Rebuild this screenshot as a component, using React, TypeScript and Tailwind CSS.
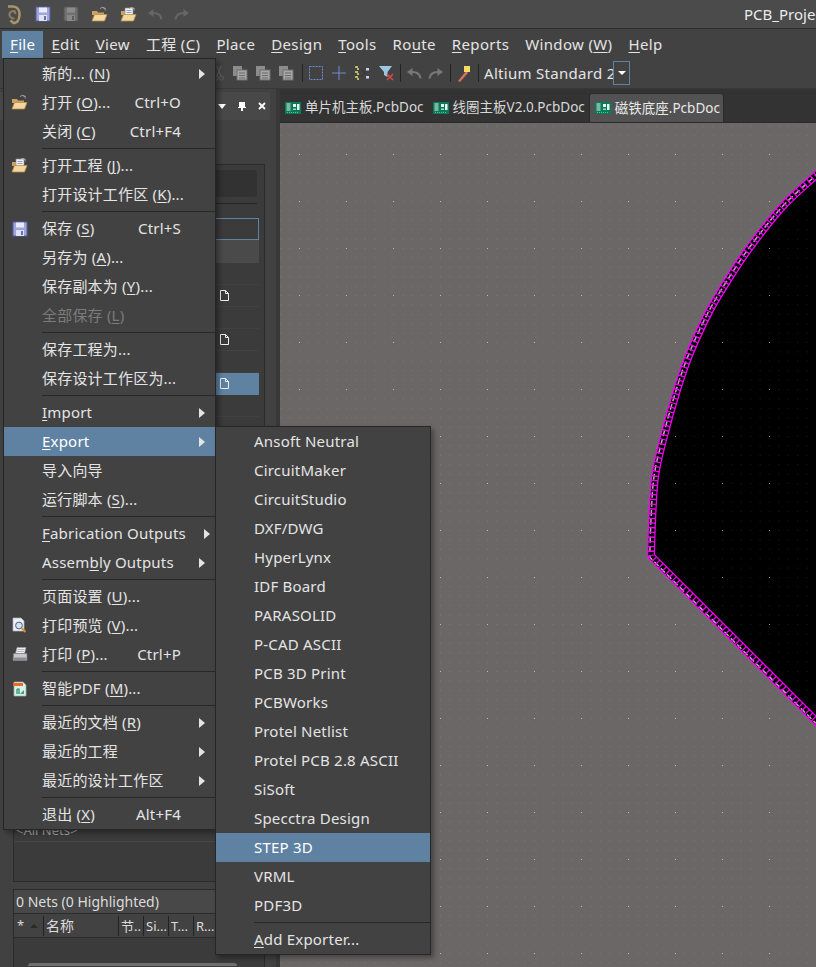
import React from "react";

const FONT = "font-['Noto_Sans','Noto_Sans_CJK_SC',sans-serif]";

type MenuEntry =
  | { sep: true }
  | { label: string; key?: string; arrow?: boolean; icon?: React.ReactNode; disabled?: boolean; active?: boolean; sep?: false };

// "&" marks the mnemonic letter, same as a Windows menu resource
function Label({ text }: { text: string }) {
  const i = text.indexOf("&");
  if (i < 0) return <>{text}</>;
  return (
    <>
      {text.slice(0, i)}
      <u className="underline-offset-2">{text[i + 1]}</u>
      {text.slice(i + 2)}
    </>
  );
}

function SaveIcon({ dim }: { dim?: boolean }) {
  return (
    <svg width="16" height="16" viewBox="0 0 16 16" className={dim ? "opacity-40 grayscale" : ""}>
      <rect x="1" y="1" width="14" height="14" fill="#9ea4dc" stroke="#565c98" />
      <rect x="4" y="1.5" width="8" height="5" fill="#e9ebfa" />
      <rect x="4" y="9" width="8" height="6" fill="#dfe2f6" />
      <rect x="9" y="10" width="2" height="4" fill="#6a70aa" />
    </svg>
  );
}

function FolderIcon({ doc }: { doc?: boolean }) {
  return (
    <svg width="17" height="17" viewBox="0 0 17 17">
      <path d="M1 5h5l1 1.5h6V9H1z" fill="#c9a263" />
      {doc && <rect x="5" y="2" width="8" height="8" fill="#f2f2f2" stroke="#8a8a8a" strokeWidth="0.6" />}
      {doc && <path d="M6.5 4.5h5M6.5 6.5h5" stroke="#7684b8" strokeWidth="0.8" />}
      <path d="M1 15 L3.5 8.5 H16 L13.5 15z" fill="#f3d79f" stroke="#b68c4c" strokeWidth="0.8" />
      <path d="M9 2.5c2-1.5 4-1.5 5 .5" fill="none" stroke="#a9a9a9" strokeWidth="0.9" />
      <path d="M14.2 4.5v-2.4h-2" fill="none" stroke="#a9a9a9" strokeWidth="0.8" />
    </svg>
  );
}

function PreviewIcon() {
  return (
    <svg width="16" height="17" viewBox="0 0 16 17">
      <path d="M1 1h8l3 3v10H1z" fill="#eef0f6" stroke="#aeb2c0" strokeWidth="0.7" />
      <circle cx="7" cy="8.5" r="3.4" fill="#cfe2f3" stroke="#50607a" strokeWidth="1" />
      <path d="M9.5 11l4 4" stroke="#d6913a" strokeWidth="1.8" />
    </svg>
  );
}

function PrintIcon() {
  return (
    <svg width="16" height="15" viewBox="0 0 16 15">
      <path d="M5 0.500h9l-1.500 6h-9z" fill="#f0f0f0" stroke="#9b9b9b" strokeWidth="0.6" />
      <path d="M5.500 2.500h7M5 4.500h7" stroke="#8e8e8e" strokeWidth="0.6" />
      <path d="M1.500 6.500h13.500v7H1z" fill="#c8c8cc" stroke="#77777d" strokeWidth="0.7" />
      <rect x="1.500" y="10.500" width="13" height="3" fill="#8c8c92" />
    </svg>
  );
}

function PdfIcon() {
  return (
    <svg width="16" height="16" viewBox="0 0 16 16">
      <path d="M2 1h9l3 3v11H2z" fill="#dceee6" stroke="#8eb6a6" strokeWidth="0.7" />
      <rect x="1" y="2" width="10" height="3" fill="#ee6a24" />
      <path d="M5 8v5M5 8h2v5" fill="none" stroke="#1d8a68" strokeWidth="1.2" />
      <path d="M8 13l4-4v4z" fill="#35a47f" />
    </svg>
  );
}

function PcbIcon() {
  return (
    <svg width="16" height="12" viewBox="0 0 16 12" className="shrink-0">
      <rect width="16" height="12" fill="#0b7a58" />
      <path d="M1.5 2h4M1.5 4h4M1.5 6h4M1.5 8h4" stroke="#e6f5ee" strokeWidth="1" />
      <rect x="8" y="2" width="3" height="3" fill="#e6f5ee" />
      <rect x="12" y="2" width="2.5" height="6" fill="#e6f5ee" />
      <rect x="8" y="6.5" width="3" height="1.5" fill="#9fd8c0" />
      <path d="M2 10.5h12" stroke="#5fbb98" strokeWidth="1" strokeDasharray="1 1" />
    </svg>
  );
}

function DocIcon() {
  return (
    <svg width="9" height="11" viewBox="0 0 9 11">
      <path d="M.5.5h5l3 3v7H.5z" fill="none" stroke="#eeeeee" />
      <path d="M5.5.5v3h3" fill="none" stroke="#eeeeee" />
    </svg>
  );
}

function Arrow() {
  return (
    <svg width="6" height="10" viewBox="0 0 6 10">
      <path d="M0 0l6 5-6 5z" fill="#e4e4e4" />
    </svg>
  );
}

function UndoIcon({ flip, color }: { flip?: boolean; color: string }) {
  return (
    <svg width="16" height="12" viewBox="0 0 16 12" className={flip ? "-scale-x-100" : ""}>
      <path d="M14.500 11.500C14 7 11 5 6 5" fill="none" stroke={color} strokeWidth="2.200" />
      <path d="M6.500 1L1 5l5.500 4z" fill={color} />
    </svg>
  );
}

const fileMenu: MenuEntry[] = [
  { label: "新的... (&N)", arrow: true },
  { label: "打开 (&O)...", key: "Ctrl+O", icon: <FolderIcon /> },
  { label: "关闭 (&C)", key: "Ctrl+F4" },
  { sep: true },
  { label: "打开工程 (&J)...", icon: <FolderIcon doc /> },
  { label: "打开设计工作区 (&K)..." },
  { sep: true },
  { label: "保存 (&S)", key: "Ctrl+S", icon: <SaveIcon /> },
  { label: "另存为 (&A)..." },
  { label: "保存副本为 (&Y)..." },
  { label: "全部保存 (&L)", disabled: true },
  { sep: true },
  { label: "保存工程为..." },
  { label: "保存设计工作区为..." },
  { sep: true },
  { label: "&Import", arrow: true },
  { label: "&Export", arrow: true, active: true },
  { label: "导入向导" },
  { label: "运行脚本 (&S)..." },
  { sep: true },
  { label: "&Fabrication Outputs", arrow: true },
  { label: "Assem&bly Outputs", arrow: true },
  { sep: true },
  { label: "页面设置 (&U)..." },
  { label: "打印预览 (&V)...", icon: <PreviewIcon /> },
  { label: "打印 (&P)...", key: "Ctrl+P", icon: <PrintIcon /> },
  { sep: true },
  { label: "智能PDF (&M)...", icon: <PdfIcon /> },
  { sep: true },
  { label: "最近的文档 (&R)", arrow: true },
  { label: "最近的工程", arrow: true },
  { label: "最近的设计工作区", arrow: true },
  { sep: true },
  { label: "退出 (&X)", key: "Alt+F4" },
];

const exportMenu: MenuEntry[] = [
  { label: "Ansoft Neutral" },
  { label: "CircuitMaker" },
  { label: "CircuitStudio" },
  { label: "DXF/DWG" },
  { label: "HyperLynx" },
  { label: "IDF Board" },
  { label: "PARASOLID" },
  { label: "P-CAD ASCII" },
  { label: "PCB 3D Print" },
  { label: "PCBWorks" },
  { label: "Protel Netlist" },
  { label: "Protel PCB 2.8 ASCII" },
  { label: "SiSoft" },
  { label: "Specctra Design" },
  { label: "STEP 3D", active: true },
  { label: "VRML" },
  { label: "PDF3D" },
  { sep: true },
  { label: "&Add Exporter..." },
];

function Menu({ items, className }: { items: MenuEntry[]; className: string }) {
  return (
    <div className={`absolute z-10 border border-[#262626] bg-[#424242] shadow-[3px_3px_5px_rgba(0,0,0,0.35)] ${className}`}>
      {items.map((it, i) =>
        it.sep ? (
          <div key={i} className="ml-[38px] flex h-[5px] items-center">
            <div className="h-px w-full bg-[#282828]" />
          </div>
        ) : (
          <div
            key={i}
            className={`flex h-[29px] items-center whitespace-nowrap text-[15px] tracking-[0.2px] ${it.active ? "bg-[#5f82a3] text-white" : ""} ${
              it.disabled ? "text-[#7b7b7b]" : "text-[#e4e4e4]"
            }`}
          >
            <div className="flex w-[38px] shrink-0 justify-center pr-[7px]">{it.icon}</div>
            <span className="flex-1">
              <Label text={it.label} />
            </span>
            {it.key && <span>{it.key}</span>}
            {it.key || it.arrow ? (
              <div className="flex w-[34px] shrink-0 justify-end pr-[10px]">{it.arrow && <Arrow />}</div>
            ) : null}
          </div>
        ),
      )}
    </div>
  );
}

const menuBar = ["&File", "&Edit", "&View", "工程 (&C)", "&Place", "&Design", "&Tools", "Ro&ute", "&Reports", "Window (&W)", "&Help"];

function TitleBar() {
  return (
    <div className="flex h-[29px] shrink-0 items-center overflow-hidden border-b border-[#2c2c2c] bg-[#4b4b4b]">
      <svg width="14" height="21" viewBox="0 0 14 21" className="ml-[7px]">
        <path d="M1 2.500H6C10.500 2.500 12.500 6 12.500 10.500C12.500 15 10.500 19 6.500 19L3.500 16.500" fill="none" stroke="#a8946a" strokeWidth="2.600" />
        <path d="M7.500 14.500C4.500 14.500 2.500 12.500 2.500 10.500C2.500 8 4.500 7 7.500 7L8.500 10" fill="none" stroke="#8d7d5a" strokeWidth="2.200" />
      </svg>
      <div className="ml-[14px] flex items-center gap-[12px]">
        <SaveIcon />
        <SaveIcon dim />
        <FolderIcon />
        <FolderIcon doc />
        <div className="-ml-[2px]">
          <UndoIcon color="#666666" />
        </div>
        <div className="-ml-[1px]">
          <UndoIcon flip color="#666666" />
        </div>
      </div>
      <span className="ml-auto w-[72px] shrink-0 overflow-hidden whitespace-nowrap text-[15px] text-[#ececec]">PCB_Project</span>
    </div>
  );
}

function MenuBar() {
  return (
    <div className="flex h-[29px] shrink-0 items-end bg-[#424242] pl-[2px] text-[15px] tracking-[0.35px] text-[#e4e4e4]">
      {menuBar.map((m, i) => (
        <div
          key={m}
          className={`flex h-[27px] items-center whitespace-nowrap px-[8px] ${i === 0 ? "bg-[#5f82a3] text-white" : ""}`}
        >
          <span>
            <Label text={m} />
          </span>
        </div>
      ))}
    </div>
  );
}

function ToolSep() {
  return <div className="h-[18px] w-px bg-[#232323]" />;
}

function Toolbar() {
  return (
    <div className="flex h-[31px] shrink-0 items-center border-b border-[#383838] bg-[#424242] pl-[214px]">
      <svg width="10" height="16" viewBox="0 0 10 16" className="opacity-50">
        <path d="M7 1L3 11M3 1l4 10" stroke="#777" strokeWidth="1.2" />
        <circle cx="2.500" cy="13" r="2" fill="none" stroke="#777" />
        <circle cx="7.500" cy="13" r="2" fill="none" stroke="#777" />
      </svg>
      <div className="ml-[8px] flex items-center gap-[7px]">
        {[0, 1, 2].map((i) => (
          <svg key={i} width="16" height="16" viewBox="0 0 16 16">
            <rect x="1" y="1" width="9" height="10" fill="#8c8c8c" />
            <rect x="5" y="5" width="10" height="10" fill="#a6a6a6" stroke="#6f6f6f" />
            <path d="M7 8h6M7 10.500h6M7 13h6" stroke="#6b6b6b" />
          </svg>
        ))}
      </div>
      <div className="ml-[8px]">
        <ToolSep />
      </div>
      <svg width="15" height="15" viewBox="0 0 15 15" className="ml-[6px]">
        <rect x=".5" y=".5" width="13" height="13" fill="none" stroke="#7288d4" strokeDasharray="2 1" />
      </svg>
      <svg width="14" height="14" viewBox="0 0 14 14" className="ml-[8px]">
        <path d="M7 0v14M0 7h14" stroke="#7288d4" />
      </svg>
      <svg width="16" height="14" viewBox="0 0 16 14" className="ml-[8px]">
        <path d="M1 1h3M3 3h2M1 6h3M3 8h2M1 11h3M3 13h2" stroke="#e4e070" strokeWidth="1.4" />
        <path d="M7 3l4 4-4 4" fill="none" stroke="#333" />
        <rect x="12" y="2" width="3" height="2.500" fill="#ccd2ee" />
        <rect x="12" y="10" width="3" height="2.500" fill="#ccd2ee" />
      </svg>
      <svg width="17" height="16" viewBox="0 0 17 16" className="ml-[8px]">
        <path d="M1 1h13L9.500 7v5L6 10V7z" fill="#9cc6e4" />
        <path d="M9 9l6 6M15 9l-6 6" stroke="#d24a4a" strokeWidth="1.6" />
      </svg>
      <div className="ml-[5px]">
        <ToolSep />
      </div>
      <div className="ml-[5px]">
        <UndoIcon color="#787878" />
      </div>
      <div className="ml-[6px]">
        <UndoIcon flip color="#787878" />
      </div>
      <div className="ml-[6px]">
        <ToolSep />
      </div>
      <svg width="14" height="17" viewBox="0 0 14 17" className="ml-[6px]">
        <path d="M1 16l8-10 2 2-8 9z" fill="#d9705a" />
        <rect x="7" y="1" width="6" height="6" fill="#f3dc66" />
      </svg>
      <div className="ml-[7px]">
        <ToolSep />
      </div>
      <span className="ml-[5px] w-[129px] shrink-0 overflow-hidden whitespace-nowrap text-[15px] tracking-[0.3px] text-[#e4e4e4]">Altium Standard 2D</span>
      <div className="flex h-[24px] w-[17px] shrink-0 items-center justify-center border border-[#5f82a3]">
        <div className="h-0 w-0 border-x-[4px] border-t-[4px] border-x-transparent border-t-white" />
      </div>
    </div>
  );
}

function PanelHeader() {
  return (
    <div className="mt-[3px] mr-[6px] flex h-[28px] items-center justify-end bg-[#484848] pr-[4px]">
      <div className="mr-[12px] h-0 w-0 border-x-[4px] border-t-[5px] border-x-transparent border-t-white" />
      <svg width="8" height="9" viewBox="0 0 8 9" className="mr-[12px]">
        <path d="M1 0h6v5h1v1H5v3H3V6H0V5h1z" fill="#fff" />
      </svg>
      <svg width="8" height="8" viewBox="0 0 8 8">
        <path d="M1 1l6 6M7 1L1 7" stroke="#fff" strokeWidth="1.8" />
      </svg>
    </div>
  );
}

function ListRow({ doc, active }: { doc?: boolean; active?: boolean }) {
  return (
    <div className={`flex h-[22px] items-center justify-end border-b pr-[30px] ${active ? "border-transparent bg-[#5f82a3]" : "border-[#424242]"}`}>
      {doc && <DocIcon />}
    </div>
  );
}

function NetsPanel() {
  const cols = [
    { t: "名称", w: "w-[75px]" },
    { t: "节..", w: "w-[25px]" },
    { t: "Si...", w: "w-[25px]" },
    { t: "T...", w: "w-[25px]" },
    { t: "R...", w: "w-[25px]" },
  ];
  return (
    <div className="mt-[7px] ml-[13px] flex w-[252px] flex-1 flex-col border border-b-0 border-[#2b2b2b] bg-[#3b3b3b]">
      <div className="flex h-[24px] shrink-0 items-center border-b border-[#2b2b2b] bg-[#484848] pl-[2px] text-[14px] text-[#dcdcdc]">
        0 Nets (0 Highlighted)
      </div>
      <div className="flex h-[24px] shrink-0 items-center border-b border-[#2b2b2b] bg-[#424242] text-[13px] text-[#dcdcdc]">
        <div className="flex w-[29px] shrink-0 items-center gap-[6px] pl-[3px]">
          <span>*</span>
          <div className="h-0 w-0 border-x-[4px] border-b-[4px] border-x-transparent border-b-[#2a2a2a]" />
        </div>
        {cols.map((c) => (
          <div key={c.t} className={`h-[20px] shrink-0 overflow-hidden whitespace-nowrap border-l border-[#222] pl-[2px] leading-[20px] ${c.w} ${c.t === "名称" ? "text-[14px]" : ""}`}>
            {c.t}
          </div>
        ))}
      </div>
      <div className="flex flex-1 items-end pb-[1px] pl-[14px]">
        <div className="h-[3px] w-[209px] rounded-t-[3px] bg-[#6e6e6e]" />
      </div>
    </div>
  );
}

function LeftPanel() {
  return (
    <div className="flex w-[280px] shrink-0 flex-col border-r-4 border-[#383838] bg-[#414141]">
      <PanelHeader />
      <div className="mt-[44px] ml-[13px] flex h-[718px] w-[252px] shrink-0 flex-col border border-[#2b2b2b] bg-[#3b3b3b]">
        <div className="mt-[5px] ml-[6px] h-[27px] w-[237px] shrink-0 rounded-[3px] bg-[#323232]" />
        <div className="mt-[6px] ml-[6px] h-px w-[237px] shrink-0 bg-[#262626]" />
        <div className="mt-[14px] ml-[6px] flex w-[239px] flex-col">
          <div className="h-[22px] border border-[#5f82a3]" />
          <div className="h-[23px] bg-[#4a4a4a]" />
          <ListRow />
          <ListRow doc />
          <ListRow />
          <ListRow doc />
          <ListRow />
          <ListRow doc active />
          <ListRow />
        </div>
        <div className="flex-1" />
        <div className="flex h-[22px] shrink-0 items-center border-b border-[#464646] pl-[2px] text-[13px] text-[#a0a0a0]">&lt;All Nets&gt;</div>
        <div className="h-[39px] shrink-0" />
      </div>
      <NetsPanel />
    </div>
  );
}

function Tab({ name, active }: { name: string; active?: boolean }) {
  return (
    <div
      className={`flex h-[29px] items-center gap-[4px] whitespace-nowrap rounded-t-[3px] pl-[5px] pr-[3px] text-[13.5px] ${
        active ? "border-x border-t border-[#2b2b2b] bg-[#525252] text-[#e8e8e8]" : "text-[#d8d8d8]"
      }`}
    >
      <PcbIcon />
      {name}
    </div>
  );
}

// board outline points read off the screenshot, smoothed with catmull-rom
const arc: [number, number][] = [
  [840, 152], [816, 175], [783, 206], [753, 243], [733, 272], [710, 310], [690, 353], [677, 390], [663, 440], [655, 477], [652, 523], [651, 556],
];

function smooth(pts: [number, number][]) {
  let d = `M${pts[0][0]} ${pts[0][1]}`;
  for (let i = 0; i < pts.length - 1; i++) {
    const p0 = pts[Math.max(i - 1, 0)];
    const p1 = pts[i];
    const p2 = pts[i + 1];
    const p3 = pts[Math.min(i + 2, pts.length - 1)];
    const c1x = p1[0] + (p2[0] - p0[0]) / 6;
    const c1y = p1[1] + (p2[1] - p0[1]) / 6;
    const c2x = p2[0] - (p3[0] - p1[0]) / 6;
    const c2y = p2[1] - (p3[1] - p1[1]) / 6;
    d += ` C${c1x} ${c1y} ${c2x} ${c2y} ${p2[0]} ${p2[1]}`;
  }
  return d;
}

const boardPath = `${smooth(arc)} L840 745 L840 980 L860 980 L860 152 Z`;

function Canvas() {
  return (
    <svg className="block min-h-0 w-full flex-1" viewBox="280 123 536 844" preserveAspectRatio="xMinYMin slice">
      <defs>
        <pattern id="grid" x="675" y="530" width="47" height="47" patternUnits="userSpaceOnUse">
          {[0, 1, 2, 3, 4].flatMap((a) =>
            [0, 1, 2, 3, 4].map((b) => (
              <rect key={`${a}-${b}`} x={a * 9.4} y={b * 9.4} width="1" height="1" fill="#fff" opacity={a === 0 && b === 0 ? 0.55 : 0.1} />
            )),
          )}
        </pattern>
      </defs>
      <rect x="280" y="123" width="536" height="844" fill="#6b6766" />
      <path d={boardPath} fill="#000" />
      <rect x="280" y="123" width="536" height="844" fill="url(#grid)" />
      <path d={boardPath} fill="none" stroke="#f400f4" strokeWidth="8" strokeLinejoin="round" />
      <path d={boardPath} fill="none" stroke="#000" strokeWidth="5.500" strokeLinejoin="round" />
      <path d={boardPath} fill="none" stroke="#b0b0b0" strokeWidth="1.500" strokeDasharray="6 3" transform="translate(-1.200 1.200)" />
      <path d={boardPath} fill="none" stroke="#f400f4" strokeWidth="7" strokeDasharray="1.300 3.400" />
    </svg>
  );
}

export default function App() {
  return (
    <div className={`relative flex h-[967px] w-[816px] flex-col overflow-hidden bg-[#424242] ${FONT}`}>
      <TitleBar />
      <MenuBar />
      <Toolbar />
      <div className="flex min-h-0 flex-1">
        <LeftPanel />
        <div className="flex min-w-0 flex-1 flex-col">
          <div className="flex h-[34px] shrink-0 items-end gap-[1px] border-b border-[#2b2b2b] bg-[#333333]">
            <Tab name="单片机主板.PcbDoc" />
            <Tab name="线圈主板V2.0.PcbDoc" />
            <Tab name="磁铁底座.PcbDoc" active />
          </div>
          <Canvas />
        </div>
      </div>
      <Menu items={fileMenu} className="left-[3px] top-[58px] w-[213px]" />
      <Menu items={exportMenu} className="left-[215px] top-[426px] w-[216px]" />
    </div>
  );
}
